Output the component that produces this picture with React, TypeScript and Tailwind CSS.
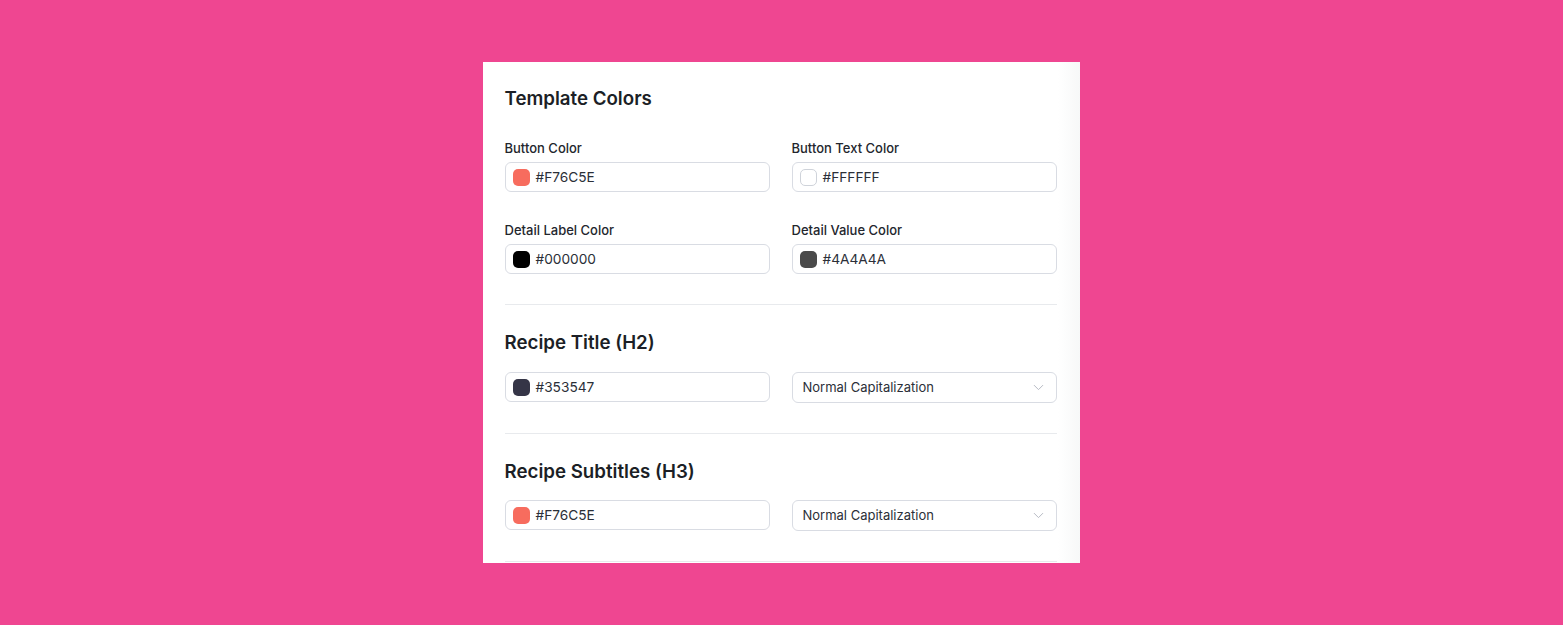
import { ChevronDown } from "lucide-react";

function ColorInput({ color, value, border }: { color: string; value: string; border?: boolean }) {
  return (
    <div className="flex items-center h-[30px] rounded-md border border-[#d9dce3] bg-white px-[7px]">
      <span
        className={`w-[17px] h-[17px] rounded-[5px] ${border ? "border border-[#cfd3da]" : ""}`}
        style={{ backgroundColor: color }}
      />
      <span className="ml-[6px] text-[13.7px] text-[#2b2f38]">{value}</span>
    </div>
  );
}

function SelectBox() {
  return (
    <div className="flex items-center justify-between h-[31px] rounded-md border border-[#d9dce3] bg-white pl-[10px] pr-[9px]">
      <span className="text-[13px] text-[#2b2f38]">Normal Capitalization</span>
      <ChevronDown size={17} strokeWidth={1.4} className="text-[#b5b9c2]" />
    </div>
  );
}

function Field({ label, color, value, border }: { label: string; color: string; value: string; border?: boolean }) {
  return (
    <div className="flex flex-col">
      <label className="text-[13px] leading-[20px] font-medium text-[#23262d] mb-[4px]">{label}</label>
      <ColorInput color={color} value={value} border={border} />
    </div>
  );
}

export default function App() {
  return (
    <div
      className="w-[1563px] h-[625px] bg-[#ef4691] flex justify-center pt-[62px]"
      style={{ fontFamily: "Inter, 'Noto Sans', sans-serif" }}
    >
      <div className="relative w-[597px] h-[501px] bg-white overflow-hidden ml-[-1px]">
        <div className="absolute right-0 top-0 bottom-0 w-[22px] bg-gradient-to-r from-white to-[#f7f8f8]" />
        <div className="relative px-[22px] pt-[23px] pr-[23px]">
          <h2 className="text-[18.7px] leading-[28px] font-semibold text-[#1c1f26]">Template Colors</h2>
          <div className="grid grid-cols-2 gap-x-[22px] gap-y-[28px] mt-[25px]">
            <Field label="Button Color" color="#F76C5E" value="#F76C5E" />
            <Field label="Button Text Color" color="#FFFFFF" value="#FFFFFF" border />
            <Field label="Detail Label Color" color="#000000" value="#000000" />
            <Field label="Detail Value Color" color="#4A4A4A" value="#4A4A4A" />
          </div>
          <div className="h-px bg-[#e8eaed] mt-[30px]" />

          <h2 className="text-[18.7px] leading-[28px] font-semibold text-[#1c1f26] mt-[24px]">Recipe Title (H2)</h2>
          <div className="grid grid-cols-2 gap-x-[22px] mt-[15px]">
            <ColorInput color="#353547" value="#353547" />
            <SelectBox />
          </div>
          <div className="h-px bg-[#e8eaed] mt-[30px]" />

          <h2 className="text-[18.7px] leading-[28px] font-semibold text-[#1c1f26] mt-[24px]">Recipe Subtitles (H3)</h2>
          <div className="grid grid-cols-2 gap-x-[22px] mt-[14px]">
            <ColorInput color="#F76C5E" value="#F76C5E" />
            <SelectBox />
          </div>
          <div className="h-px bg-[#e8eaed] mt-[30px]" />
        </div>
      </div>
    </div>
  );
}
